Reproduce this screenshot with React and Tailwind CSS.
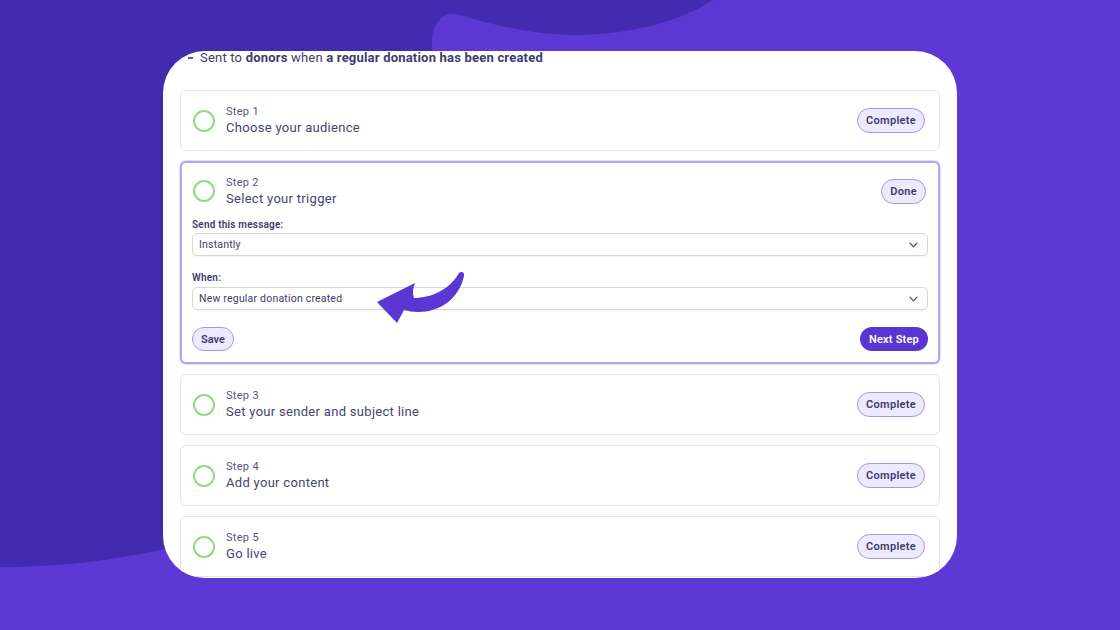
import React from "react";

const font = { fontFamily: "Roboto, 'Noto Sans', sans-serif" };

function Circle() {
  return <div className="w-[22px] h-[22px] rounded-full border-2 border-[#8fdc7f] shrink-0" />;
}

function PillButton({ children }) {
  return (
    <button className="h-[25px] px-[8px] rounded-full border-[1.5px] border-[#a893ec] bg-[#eeeafd] text-[11px] font-semibold tracking-[0.3px] text-[#3b3a6b] leading-none">
      {children}
    </button>
  );
}

function StepCard({ step, title }) {
  return (
    <div className="h-[61px] shrink-0 rounded-[6px] border border-[#e6e6ea] bg-white flex items-center justify-between pl-[12px] pr-[14px]">
      <div className="flex items-center gap-[11px]">
        <Circle />
        <div className="flex flex-col">
          <span className="text-[11px] leading-[15px] text-[#55547f] tracking-[0.3px]">Step {step}</span>
          <span className="text-[13px] leading-[18px] text-[#45446f] tracking-[0.3px]">{title}</span>
        </div>
      </div>
      <PillButton>Complete</PillButton>
    </div>
  );
}

function Chevron() {
  return (
    <svg width="9" height="6" viewBox="0 0 9 6" fill="none">
      <path d="M1 1.2 L4.5 4.8 L8 1.2" stroke="#4a4970" strokeWidth="1.2" strokeLinecap="round" strokeLinejoin="round" />
    </svg>
  );
}

function Select({ value }) {
  return (
    <div className="h-[23px] rounded-[5px] border border-[#d6d6dc] bg-white shadow-[0_1px_1px_rgba(0,0,0,0.04)] flex items-center justify-between pl-[6px] pr-[9px]">
      <span className="text-[10.5px] text-[#3d3c6b] tracking-[0.2px]">{value}</span>
      <Chevron />
    </div>
  );
}

function Arrow() {
  return (
    <svg className="absolute left-[370px] top-[265px]" width="100" height="62" viewBox="0 0 100 62">
      <path
        d="M7 37 L45 18 C43 23 42 28 44 33 C62 33 80 24 89 8 C91 6 95 7 94 11 C89 34 70 47 48 47 C43 47 38 46 34 45 L27 58 Z"
        fill="#5a36d3"
      />
    </svg>
  );
}

export default function App() {
  return (
    <div className="relative w-[1120px] h-[630px] overflow-hidden bg-[#5e38d4]" style={font}>
      <svg className="absolute inset-0" width="1120" height="630" viewBox="0 0 1120 630">
        <path
          d="M0 0 L713 0 C680 22 630 34 580 35 C530 35 490 24 460 15 C444 10 430 22 432 48 L432 300 L200 540 C130 560 60 567 0 567 Z"
          fill="#422bae"
        />
      </svg>
      <div className="relative flex justify-center pt-[51px]">
        <div className="w-[794px] h-[527px] rounded-[42px] bg-white overflow-hidden px-[17px] flex flex-col">
          <div className="mt-0 h-[14px] pl-[20px] text-[13px] leading-[14px] text-[#3d3b6e] tracking-[0.2px] flex items-center relative">
            <span className="absolute left-[8px] top-[6px] w-[5px] h-[2px] bg-[#5c5a88]" />
            <span>
              Sent to <b className="font-bold">donors</b> when <b className="font-bold">a regular donation has been created</b>
            </span>
          </div>
          <div className="mt-[25px] flex flex-col gap-[10px]">
            <StepCard step={1} title="Choose your audience" />
            <div className="relative shrink-0 rounded-[6px] border-2 border-[#b6a4f1] bg-white shadow-[0_0_0_1px_#e4dcfb] px-[10px] pb-[11px]">
              <div className="h-[56px] flex items-center justify-between pl-[1px] pr-[2px]">
                <div className="flex items-center gap-[11px]">
                  <Circle />
                  <div className="flex flex-col">
                    <span className="text-[11px] leading-[15px] text-[#55547f] tracking-[0.3px]">Step 2</span>
                    <span className="text-[13px] leading-[18px] text-[#45446f] tracking-[0.3px]">Select your trigger</span>
                  </div>
                </div>
                <PillButton>Done</PillButton>
              </div>
              <div className="text-[10px] leading-[12px] font-semibold text-[#3d3c6b] tracking-[0.2px]">Send this message:</div>
              <div className="mt-[2px]">
                <Select value="Instantly" />
              </div>
              <div className="mt-[16px] text-[10px] leading-[12px] font-semibold text-[#3d3c6b] tracking-[0.2px]">When:</div>
              <div className="mt-[3px]">
                <Select value="New regular donation created" />
              </div>
              <div className="mt-[17px] flex items-center justify-between">
                <button className="h-[24px] w-[42px] rounded-full border-[1.5px] border-[#a893ec] bg-[#eeeafd] text-[11px] font-semibold text-[#3b3a6b] leading-none">
                  Save
                </button>
                <button className="h-[24px] w-[68px] rounded-full bg-[#5a35d1] text-[11px] font-semibold text-white leading-none tracking-[0.2px]">
                  Next Step
                </button>
              </div>
            </div>
            <StepCard step={3} title="Set your sender and subject line" />
            <StepCard step={4} title="Add your content" />
            <StepCard step={5} title="Go live" />
          </div>
        </div>
      </div>
      <Arrow />
    </div>
  );
}
